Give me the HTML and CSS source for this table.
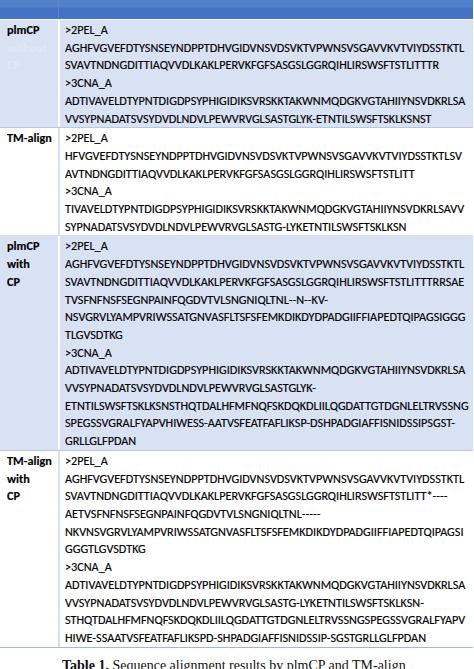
FILE: index.html
```html
<!DOCTYPE html>
<html>
<head>
<meta charset="utf-8">
<link rel="stylesheet" href="styles.css">
</head>
<body>
<div class="page">
  <div class="table">
    <div class="head"><div class="hcell"></div><div class="hcell"></div></div>

    <div class="row shaded">
      <div class="label">plmCP<br><span class="ghost">without</span><br><span class="ghost">CP</span></div>
      <div class="seq">
        <div>&gt;2PEL_A</div>
        <div>AGHFVGVEFDTYSNSEYNDPPTDHVGIDVNSVDSVKTVPWNSVSGAVVKVTVIYDSSTKTL</div>
        <div>SVAVTNDNGDITTIAQVVDLKAKLPERVKFGFSASGSLGGRQIHLIRSWSFTSTLITTTR</div>
        <div>&gt;3CNA_A</div>
        <div>ADTIVAVELDTYPNTDIGDPSYPHIGIDIKSVRSKKTAKWNMQDGKVGTAHIIYNSVDKRLSA</div>
        <div>VVSYPNADATSVSYDVDLNDVLPEWVRVGLSASTGLYK-ETNTILSWSFTSKLKSNST</div>
      </div>
    </div>

    <div class="row plain">
      <div class="label">TM-align</div>
      <div class="seq">
        <div>&gt;2PEL_A</div>
        <div>HFVGVEFDTYSNSEYNDPPTDHVGIDVNSVDSVKTVPWNSVSGAVVKVTVIYDSSTKTLSV</div>
        <div>AVTNDNGDITTIAQVVDLKAKLPERVKFGFSASGSLGGRQIHLIRSWSFTSTLITT</div>
        <div>&gt;3CNA_A</div>
        <div>TIVAVELDTYPNTDIGDPSYPHIGIDIKSVRSKKTAKWNMQDGKVGTAHIIYNSVDKRLSAVV</div>
        <div>SYPNADATSVSYDVDLNDVLPEWVRVGLSASTG-LYKETNTILSWSFTSKLKSN</div>
      </div>
    </div>

    <div class="row shaded">
      <div class="label">plmCP<br>with<br>CP</div>
      <div class="seq">
        <div>&gt;2PEL_A</div>
        <div>AGHFVGVEFDTYSNSEYNDPPTDHVGIDVNSVDSVKTVPWNSVSGAVVKVTVIYDSSTKTL</div>
        <div>SVAVTNDNGDITTIAQVVDLKAKLPERVKFGFSASGSLGGRQIHLIRSWSFTSTLITTTRRSAE</div>
        <div>TVSFNFNSFSEGNPAINFQGDVTVLSNGNIQLTNL--N--KV-</div>
        <div>NSVGRVLYAMPVRIWSSATGNVASFLTSFSFEMKDIKDYDPADGIIFFIAPEDTQIPAGSIGGG</div>
        <div>TLGVSDTKG</div>
        <div>&gt;3CNA_A</div>
        <div>ADTIVAVELDTYPNTDIGDPSYPHIGIDIKSVRSKKTAKWNMQDGKVGTAHIIYNSVDKRLSA</div>
        <div>VVSYPNADATSVSYDVDLNDVLPEWVRVGLSASTGLYK-</div>
        <div>ETNTILSWSFTSKLKSNSTHQTDALHFMFNQFSKDQKDLIILQGDATTGTDGNLELTRVSSNG</div>
        <div>SPEGSSVGRALFYAPVHIWESS-AATVSFEATFAFLIKSP-DSHPADGIAFFISNIDSSIPSGST-</div>
        <div>GRLLGLFPDAN</div>
      </div>
    </div>

    <div class="row plain last">
      <div class="label">TM-align<br>with<br>CP</div>
      <div class="seq">
        <div>&gt;2PEL_A</div>
        <div>AGHFVGVEFDTYSNSEYNDPPTDHVGIDVNSVDSVKTVPWNSVSGAVVKVTVIYDSSTKTL</div>
        <div>SVAVTNDNGDITTIAQVVDLKAKLPERVKFGFSASGSLGGRQIHLIRSWSFTSTLITT*----</div>
        <div>AETVSFNFNSFSEGNPAINFQGDVTVLSNGNIQLTNL-----</div>
        <div>NKVNSVGRVLYAMPVRIWSSATGNVASFLTSFSFEMKDIKDYDPADGIIFFIAPEDTQIPAGSI</div>
        <div>GGGTLGVSDTKG</div>
        <div>&gt;3CNA_A</div>
        <div>ADTIVAVELDTYPNTDIGDPSYPHIGIDIKSVRSKKTAKWNMQDGKVGTAHIIYNSVDKRLSA</div>
        <div>VVSYPNADATSVSYDVDLNDVLPEWVRVGLSASTG-LYKETNTILSWSFTSKLKSN-</div>
        <div>STHQTDALHFMFNQFSKDQKDLIILQGDATTGTDGNLELTRVSSNGSPEGSSVGRALFYAPV</div>
        <div>HIWE-SSAATVSFEATFAFLIKSPD-SHPADGIAFFISNIDSSIP-SGSTGRLLGLFPDAN</div>
      </div>
    </div>
  </div>
  <div class="caption"><b>Table 1.</b> Sequence alignment results by plmCP and TM-align</div>
</div>
</body>
</html>
```

FILE: styles.css
```css
html, body {
  margin: 0;
  padding: 0;
  background: #ffffff;
}

.page {
  width: 474px;
  height: 669px;
  overflow: hidden;
}

.table {
  display: flex;
  flex-direction: column;
  width: 473px;
  font-family: Carlito, Calibri, Lato, "Noto Sans", sans-serif;
  font-size: 12.2px;
  color: #000000;
  -webkit-text-stroke: 0.15px #000000;
}

.head {
  display: grid;
  grid-template-columns: 58px 1fr;
  height: 19px;
  border-bottom: 1px solid #ffffff;
}

.hcell {
  background: linear-gradient(#5380cb 0, #5380cb 7px, #4472c4 8px, #4472c4 100%);
}

.hcell + .hcell {
  border-left: 1px solid #5b85cc;
}

.row {
  display: grid;
  grid-template-columns: 58px 1fr;
  line-height: 17.7px;
}

.row.shaded {
  background: #d9e2f3;
  border-bottom: 1px solid #b7c8e6;
}

.row.plain {
  background: #ffffff;
  border-bottom: 1px solid #d3ddef;
}

.row.last {
  border-bottom: 1px solid #9fb6df;
}

.label {
  padding: 1px 0 0 7px;
  font-weight: bold;
  white-space: nowrap;
}

.ghost {
  color: #e2e9f6;
  -webkit-text-stroke: 0;
}

.seq {
  padding: 1px 0 0 5px;
  white-space: nowrap;
}

.row.shaded .seq {
  border-left: 2px solid #ffffff;
}

.row.plain .seq {
  border-left: 2px solid #d6dfef;
}

.caption {
  padding: 10px 0 0 62px;
  font-family: "Liberation Serif", "Times New Roman", serif;
  font-size: 14px;
  color: #111111;
  white-space: nowrap;
}
```
